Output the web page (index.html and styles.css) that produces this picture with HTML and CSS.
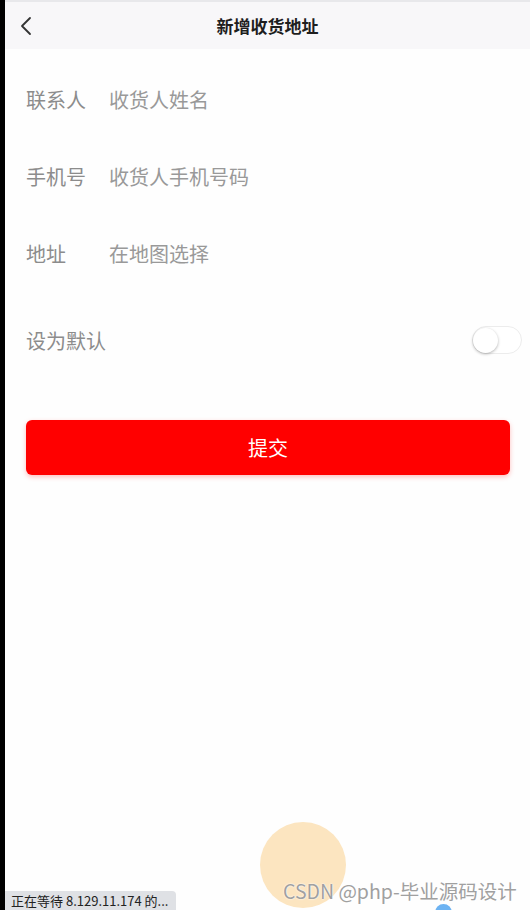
FILE: index.html
```html
<!DOCTYPE html>
<html lang="zh-CN">
<head>
    <meta charset="UTF-8">
    <meta name="viewport" content="width=device-width, initial-scale=1.0">
    <title>新增收货地址</title>
    <link rel="stylesheet" href="styles.css">
</head>
<body>
    <div class="edge"></div>
    <div class="app">
        <header class="topbar">
            <a href="#" class="back">
                <svg width="14" height="20" viewBox="0 0 14 20">
                    <path d="M11 2 L3 10 L11 18" fill="none" stroke="#333" stroke-width="1.8" stroke-linecap="round" stroke-linejoin="round"/>
                </svg>
            </a>
            <h1>新增收货地址</h1>
        </header>

        <form class="address-form">
            <div class="field">
                <label for="name">联系人</label>
                <input type="text" id="name" placeholder="收货人姓名">
            </div>
            <div class="field">
                <label for="phone">手机号</label>
                <input type="text" id="phone" placeholder="收货人手机号码">
            </div>
            <div class="field">
                <label for="addr">地址</label>
                <input type="text" id="addr" placeholder="在地图选择">
            </div>
            <div class="field default-row">
                <span class="default-label">设为默认</span>
                <span class="switch"><span class="knob"></span></span>
            </div>
            <button type="button" class="submit">提交</button>
        </form>
    </div>

    <div class="blob"></div>
    <div class="dot"></div>
    <div class="status">正在等待 8.129.11.174 的...</div>
    <div class="mark">CSDN @php-毕业源码设计</div>
</body>
</html>
```

FILE: styles.css
```css
body {
    margin: 0;
    padding: 0;
    height: 910px;
    overflow: hidden;
    display: flex;
    background: #fefefe;
    font-family: "Noto Sans CJK SC", "Noto Sans", sans-serif;
}

.edge {
    width: 5px;
    background: #000;
}

.app {
    flex: 1;
    display: flex;
    flex-direction: column;
}

.topbar {
    height: 47px;
    border-top: 2px solid #e8e8eb;
    background: #f8f7f9;
    display: flex;
    align-items: center;
    justify-content: center;
    position: relative;
}

.back {
    position: absolute;
    left: 14px;
    top: 14px;
    display: block;
    line-height: 0;
}

.topbar h1 {
    margin: 0;
    font-size: 17px;
    font-weight: 700;
    color: #1e1e1e;
}

.address-form {
    padding: 12px 0 0 21px;
}

.field {
    height: 77px;
    display: flex;
    align-items: center;
}

.field label,
.default-label {
    width: 83px;
    font-size: 20px;
    color: #8c8c8c;
}

.field input {
    flex: 1;
    border: none;
    outline: none;
    background: transparent;
    font-family: inherit;
    font-size: 20px;
    color: #333;
    padding: 0;
}

.field input::placeholder {
    color: #999;
}

.default-row {
    margin-top: 10px;
    height: 76px;
    justify-content: space-between;
}

.default-label {
    width: auto;
}

.switch {
    width: 50px;
    height: 28px;
    margin-right: 8px;
    border: 1px solid #ececec;
    border-radius: 15px;
    background: #fff;
    display: flex;
    align-items: center;
    box-sizing: border-box;
}

.knob {
    width: 25px;
    height: 25px;
    border-radius: 50%;
    background: #fff;
    box-shadow: 0 1px 3px rgba(0, 0, 0, 0.3);
}

.submit {
    display: block;
    margin-top: 42px;
    width: 484px;
    height: 55px;
    border: none;
    border-radius: 6px;
    background: #ff0000;
    color: #fff;
    font-family: inherit;
    font-size: 20px;
    box-shadow: 0 2px 5px rgba(255, 0, 0, 0.25);
}

.blob {
    position: absolute;
    left: 260px;
    top: 822px;
    width: 86px;
    height: 86px;
    border-radius: 50%;
    background: #fce5c0;
}

.dot {
    position: absolute;
    left: 435px;
    top: 904px;
    width: 17px;
    height: 17px;
    border-radius: 50%;
    background: #6db3f2;
}

.status {
    position: absolute;
    left: 5px;
    top: 891px;
    height: 19px;
    padding: 0 8px 0 6px;
    border-radius: 0 4px 0 0;
    background: #dfe1e5;
    color: #222;
    font-size: 13px;
    line-height: 20px;
}

.mark {
    position: absolute;
    left: 283px;
    top: 876px;
    font-size: 19.5px;
    color: #a0a0a0;
    text-shadow: 0 0 2px #fff, 0 0 1px #fff;
    font-family: "Noto Sans CJK SC", "Liberation Sans", sans-serif;
}
```
